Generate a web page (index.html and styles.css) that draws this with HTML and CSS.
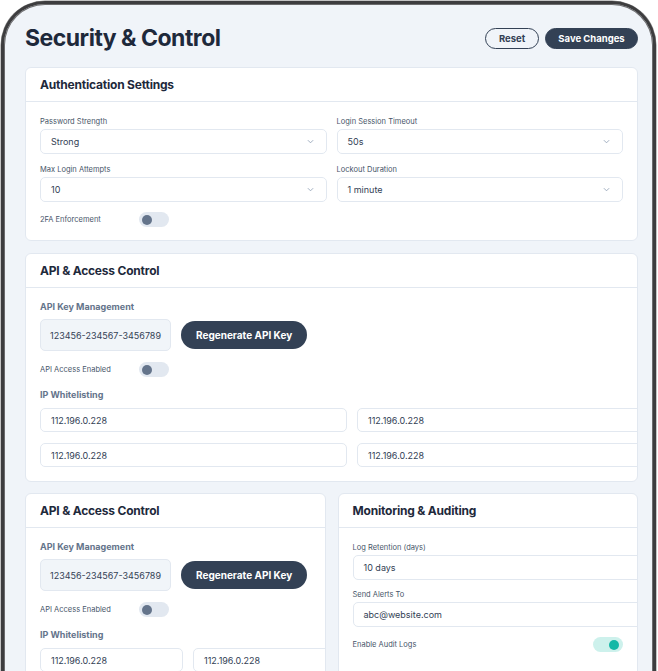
FILE: index.html
```html
<!DOCTYPE html>
<html lang="en">
<head>
<meta charset="utf-8">
<title>Security &amp; Control</title>
<link rel="stylesheet" href="styles.css">
</head>
<body>
<div class="device">
  <div class="screen">
    <header class="page-head">
      <h1>Security &amp; Control</h1>
      <div class="actions">
        <button class="btn btn-outline">Reset</button>
        <button class="btn btn-dark">Save Changes</button>
      </div>
    </header>

    <section class="card">
      <div class="card-head"><h2>Authentication Settings</h2></div>
      <div class="card-body auth">
        <div class="grid2">
          <div class="field">
            <label>Password Strength</label>
            <div class="select"><span>Strong</span><svg class="chev" viewBox="0 0 8 5"><path d="M1 1l3 3 3-3"/></svg></div>
          </div>
          <div class="field">
            <label>Login Session Timeout</label>
            <div class="select"><span>50s</span><svg class="chev" viewBox="0 0 8 5"><path d="M1 1l3 3 3-3"/></svg></div>
          </div>
          <div class="field">
            <label>Max Login Attempts</label>
            <div class="select"><span>10</span><svg class="chev" viewBox="0 0 8 5"><path d="M1 1l3 3 3-3"/></svg></div>
          </div>
          <div class="field">
            <label>Lockout Duration</label>
            <div class="select"><span>1 minute</span><svg class="chev" viewBox="0 0 8 5"><path d="M1 1l3 3 3-3"/></svg></div>
          </div>
        </div>
        <div class="toggle-row">
          <span class="toggle-label">2FA Enforcement</span>
          <span class="toggle"></span>
        </div>
      </div>
    </section>

    <section class="card">
      <div class="card-head"><h2>API &amp; Access Control</h2></div>
      <div class="card-body api">
        <div class="sub-label">API Key Management</div>
        <div class="key-row">
          <div class="key-box">123456-234567-3456789</div>
          <button class="btn-regen">Regenerate API Key</button>
        </div>
        <div class="toggle-row">
          <span class="toggle-label">API Access Enabled</span>
          <span class="toggle"></span>
        </div>
        <div class="sub-label ip-label">IP Whitelisting</div>
        <div class="ip-grid wide">
          <div class="input">112.196.0.228</div>
          <div class="input">112.196.0.228</div>
          <div class="input">112.196.0.228</div>
          <div class="input">112.196.0.228</div>
        </div>
      </div>
    </section>

    <div class="split">
      <section class="card">
        <div class="card-head"><h2>API &amp; Access Control</h2></div>
        <div class="card-body api">
          <div class="sub-label">API Key Management</div>
          <div class="key-row">
            <div class="key-box">123456-234567-3456789</div>
            <button class="btn-regen">Regenerate API Key</button>
          </div>
          <div class="toggle-row">
            <span class="toggle-label">API Access Enabled</span>
            <span class="toggle"></span>
          </div>
          <div class="sub-label ip-label">IP Whitelisting</div>
          <div class="ip-grid narrow">
            <div class="input">112.196.0.228</div>
            <div class="input">112.196.0.228</div>
            <div class="input">112.196.0.228</div>
            <div class="input">112.196.0.228</div>
          </div>
        </div>
      </section>

      <section class="card">
        <div class="card-head"><h2>Monitoring &amp; Auditing</h2></div>
        <div class="card-body monitor">
          <div class="field">
            <label>Log Retention (days)</label>
            <div class="input wide-input">10 days</div>
          </div>
          <div class="field">
            <label>Send Alerts To</label>
            <div class="input wide-input">abc@website.com</div>
          </div>
          <div class="toggle-row spread">
            <span class="toggle-label">Enable Audit Logs</span>
            <span class="toggle on"></span>
          </div>
        </div>
      </section>
    </div>
  </div>
</div>
</body>
</html>
```

FILE: styles.css
```css
* { box-sizing: border-box; }

html, body {
  margin: 0;
  height: 671px;
  overflow: hidden;
  background: #ffffff;
}

body {
  font-family: "Inter", "Noto Sans", "Liberation Sans", sans-serif;
  color: #1e293b;
  padding: 1px 0 0 1px;
}

.device {
  width: 655px;
  height: 700px;
  border: 3px solid #3d3d3f;
  border-bottom: none;
  border-radius: 44px 44px 0 0;
  overflow: hidden;
  box-shadow: 0 0 0 0.5px #8a8a8a, inset 0 0 0 1px #6b6b6d;
  background: #f0f4f9;
}

.screen {
  padding: 20px 15px 0 21px;
}

.page-head {
  display: flex;
  align-items: center;
  justify-content: space-between;
  margin-bottom: 14px;
}

h1 {
  margin: 0;
  font-size: 23px;
  line-height: 29px;
  font-weight: 700;
  letter-spacing: -0.5px;
  color: #1e293b;
}

.actions {
  display: flex;
  gap: 6px;
  margin-top: -1px;
}

.btn {
  font-family: inherit;
  height: 21px;
  border-radius: 11px;
  font-size: 9.5px;
  font-weight: 700;
  padding: 0;
  cursor: pointer;
}

.btn-outline {
  width: 54px;
  background: transparent;
  border: 1px solid #334155;
  color: #334155;
}

.btn-dark {
  width: 93px;
  background: #334155;
  border: 1px solid #334155;
  color: #ffffff;
}

.card {
  background: #ffffff;
  border: 1px solid #e2e8f0;
  border-radius: 6px;
  overflow: hidden;
  margin-bottom: 12px;
}

.card-head {
  height: 34px;
  display: flex;
  align-items: center;
  padding: 0 14px;
  border-bottom: 1px solid #e2e8f0;
}

h2 {
  margin: 0;
  font-size: 12px;
  font-weight: 700;
  letter-spacing: -0.2px;
  color: #1e293b;
}

.card-body {
  padding: 15px 14px 13px;
}

.card-body.api {
  padding-top: 13px;
  padding-bottom: 14px;
}

.grid2 {
  display: grid;
  grid-template-columns: 1fr 1fr;
  column-gap: 10px;
  row-gap: 11px;
}

.field label {
  display: block;
  font-size: 7.5px;
  line-height: 10px;
  color: #475569;
  margin-bottom: 2px;
}

.select {
  height: 25px;
  border: 1px solid #e2e8f0;
  border-radius: 5px;
  display: flex;
  align-items: center;
  justify-content: space-between;
  padding: 0 12px 0 10px;
  font-size: 9px;
  color: #334155;
}

.chev {
  width: 7px;
  height: 5px;
  fill: none;
  stroke: #94a3b8;
  stroke-width: 1;
}

.toggle-row {
  display: flex;
  align-items: center;
  height: 15px;
}

.auth .toggle-row {
  margin-top: 10px;
}

.toggle-label {
  width: 99px;
  font-size: 7.5px;
  color: #475569;
}

.toggle {
  position: relative;
  width: 30px;
  height: 15px;
  border-radius: 8px;
  background: #e2e8f0;
}

.toggle::after {
  content: "";
  position: absolute;
  top: 2.5px;
  left: 3px;
  width: 10px;
  height: 10px;
  border-radius: 50%;
  background: #64748b;
}

.toggle.on {
  background: #cdf1ec;
}

.toggle.on::after {
  left: auto;
  right: 4px;
  background: #14b8a6;
}

.sub-label {
  font-size: 9px;
  line-height: 11px;
  font-weight: 700;
  color: #64748b;
}

.key-row {
  display: flex;
  align-items: center;
  gap: 10px;
  margin-top: 7px;
  margin-bottom: 11px;
}

.key-box {
  height: 32px;
  display: flex;
  align-items: center;
  padding: 0 9px;
  background: #f1f5f9;
  border: 1px solid #e2e8f0;
  border-radius: 5px;
  font-size: 9px;
  color: #334155;
  white-space: nowrap;
}

.btn-regen {
  font-family: inherit;
  height: 28px;
  padding: 0 15px;
  border: none;
  border-radius: 14px;
  background: #334155;
  color: #ffffff;
  font-size: 10px;
  font-weight: 700;
  white-space: nowrap;
}

.ip-label {
  margin-top: 12px;
  margin-bottom: 8px;
}

.ip-grid {
  display: grid;
  column-gap: 10px;
  row-gap: 11px;
}

.ip-grid.wide {
  grid-template-columns: 307px 307px;
}

.ip-grid.narrow {
  grid-template-columns: 143px 143px;
}

.input {
  height: 24px;
  display: flex;
  align-items: center;
  padding: 0 10px;
  border: 1px solid #e2e8f0;
  border-radius: 5px;
  font-size: 9px;
  color: #334155;
  white-space: nowrap;
  background: #ffffff;
}

.split {
  display: grid;
  grid-template-columns: 1fr 1fr;
  gap: 12px;
  margin-top: -1px;
}

.split .card {
  height: 220px;
}

.monitor .field {
  margin-bottom: 10px;
}

.wide-input {
  width: 300px;
  height: 25px;
}

.toggle-row.spread {
  justify-content: space-between;
}
```
